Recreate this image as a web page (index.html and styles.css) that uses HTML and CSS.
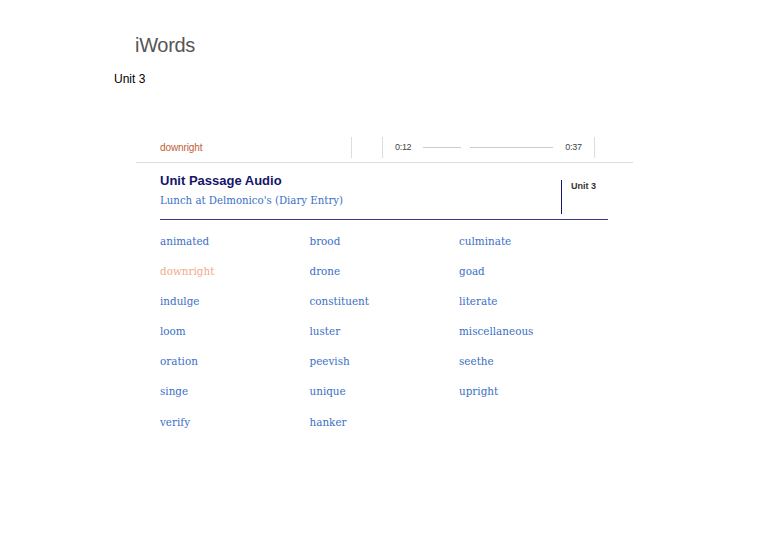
FILE: index.html
```html
<!DOCTYPE html>
<html>
<head>
<meta charset="utf-8">
<link rel="stylesheet" href="styles.css">
</head>
<body>
<div class="brand">iWords</div>
<div class="unit-label">Unit 3</div>
<div class="panel">
  <div class="player">
    <div class="current">downright</div>
    <div class="sep"></div>
    <div class="gap"></div>
    <div class="sep"></div>
    <div class="time t1">0:12</div>
    <div class="track short"></div>
    <div class="track long"></div>
    <div class="time t2">0:37</div>
    <div class="sep"></div>
  </div>
  <div class="header">
    <div class="titles">
      <div class="title">Unit Passage Audio</div>
      <div class="subtitle">Lunch at Delmonico's (Diary Entry)</div>
    </div>
    <div class="unit-tag">Unit 3</div>
  </div>
  <div class="words">
    <a>animated</a><a>brood</a><a>culminate</a>
    <a class="active">downright</a><a>drone</a><a>goad</a>
    <a>indulge</a><a>constituent</a><a>literate</a>
    <a>loom</a><a>luster</a><a>miscellaneous</a>
    <a>oration</a><a>peevish</a><a>seethe</a>
    <a>singe</a><a>unique</a><a>upright</a>
    <a>verify</a><a>hanker</a>
  </div>
</div>
</body>
</html>
```
FILE: styles.css
```css
html, body { margin: 0; padding: 0; background: #fff; }
body { font-family: "Liberation Sans", Arial, sans-serif; width: 768px; height: 543px; overflow: hidden; }
.brand { font-size: 20px; color: #555; padding: 33px 0 0 135px; line-height: 24px; letter-spacing: -0.3px; }
.unit-label { font-size: 12px; color: #000; padding: 15px 0 0 114px; line-height: 14px; }
.panel { margin: 46px 0 0 136px; width: 497px; }
.player { display: flex; align-items: center; height: 30px; border-bottom: 1px solid #ddd; }
.current { font-size: 10px; color: #c0603a; padding-left: 24px; width: 191px; letter-spacing: -0.1px; padding-top: 1px; }
.sep { width: 1px; height: 21px; background: #ddd; }
.gap { width: 30px; }
.time { font-size: 9px; color: #444; letter-spacing: -0.3px; }
.t1 { margin-left: 12px; }
.track { height: 1px; background: #ccc; }
.short { width: 38px; margin-left: 12px; }
.long { width: 83px; margin-left: 9px; }
.t2 { margin-left: 12px; margin-right: 12px; }
.header { display: flex; margin-left: 24px; width: 448px; border-bottom: 1px solid #3a3a8a; height: 56px; }
.titles { flex: 1; padding-top: 10px; }
.title { font-size: 13px; font-weight: bold; color: #14146a; line-height: 16px; }
.subtitle { font-family: "DejaVu Serif", serif; font-size: 10.2px; color: #3a6fc4; margin-top: 5px; line-height: 14px; }
.unit-tag { border-left: 1px solid #14146a; margin: 17px 0 4px; padding: 1px 0 0 9px; width: 47px; font-size: 9px; font-weight: bold; color: #333; height: 34px; box-sizing: border-box; }
.words { display: grid; grid-template-columns: 149.5px 149.5px 149.5px; margin: 13px 0 0 24px; row-gap: 0; }
.words a { font-family: "DejaVu Serif", serif; font-size: 10.4px; color: #3a6fc4; height: 30.1px; line-height: 16px; }
.words a.active { color: #f4a98a; }
```
